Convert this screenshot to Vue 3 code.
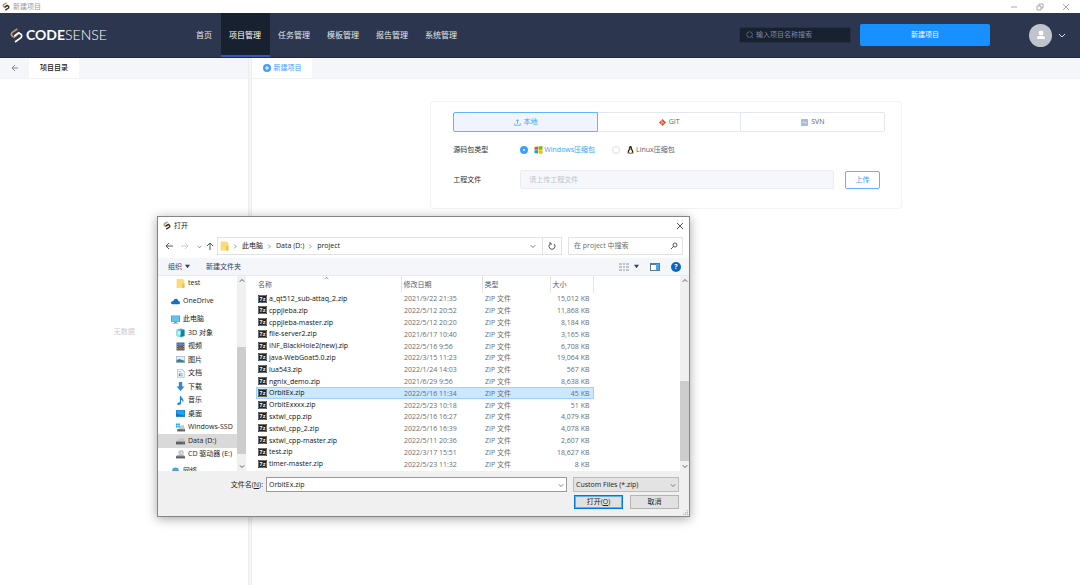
<template>
  <div class="app">
    <div class="titlebar">
      <svg class="brand-icon" viewBox="0 0 39 45">
        <path d="M22 4L7 14q-4 5 0 9l6 4 13-9" fill="none" stroke="#c49363" stroke-width="7" />
        <path d="M16 41l16-11q4-5 0-9l-6-4-13 9" fill="none" stroke="#333" stroke-width="7" />
      </svg>
      <span>新建项目</span>
      <div class="window-controls">
        <button aria-label="最小化"><svg viewBox="0 0 8 8"><path d="M1 4h6" /></svg></button>
        <button aria-label="还原"><svg viewBox="0 0 8 8"><path d="M1 3h4v4H1zM3 3V1h4v4H5" /></svg></button>
        <button aria-label="关闭"><svg viewBox="0 0 8 8"><path d="M1 1l6 6M7 1L1 7" /></svg></button>
      </div>
    </div>

    <header class="navbar">
      <a class="logo" href="#">
        <svg viewBox="0 0 39 45">
          <path d="M22 3L6 14q-4 5 0 10l6 4 14-11" fill="none" stroke="#c9986a" stroke-width="5" />
          <path d="M15 42l18-13q4-5 0-10l-7-5-13 10" fill="none" stroke="#fff" stroke-width="5" />
        </svg>
        <span class="logo-text"><b>CODE</b>SENSE</span>
      </a>
      <nav class="menu">
        <a v-for="item in menu" :key="item" href="#" :class="{ active: item === activeMenu }" @click.prevent="activeMenu = item">{{ item }}</a>
      </nav>
      <div class="nav-right">
        <label class="nav-search">
          <svg viewBox="0 0 10 10"><circle cx="4.5" cy="4.5" r="3.5" /><path d="M7 7l2 2" /></svg>
          <input v-model="keyword" type="text" placeholder="输入项目名称搜索" aria-label="输入项目名称搜索">
        </label>
        <button class="new-project">新建项目</button>
        <button class="user" aria-label="用户">
          <span class="avatar">
            <svg viewBox="0 0 10 10"><circle cx="5" cy="3" r="2.4" /><path d="M1 9V8q0-2 2-2h4q2 0 2 2v1z" /></svg>
          </span>
          <svg class="chevron" viewBox="0 0 8 8"><path d="M1 3l3 3 3-3" /></svg>
        </button>
      </div>
    </header>

    <main class="workspace">
      <aside class="catalog">
        <div class="tabs">
          <button class="back" aria-label="返回"><svg viewBox="0 0 8 8"><path d="M7 4H1M4 1L1 4l3 3" /></svg></button>
          <div class="tab dark">项目目录</div>
        </div>
        <p class="empty">无数据</p>
      </aside>
      <div class="splitter"></div>
      <section class="content">
        <div class="tabs">
          <div class="tab blue">
            <svg viewBox="0 0 8 8"><circle cx="4" cy="4" r="4" fill="#409eff" /><path d="M4 2v4M2 4h4" stroke="#fff" /></svg>
            新建项目
          </div>
        </div>
        <form class="card" @submit.prevent>
          <div class="source-tabs">
            <button type="button" :class="{ active: source === 'local' }" @click="source = 'local'">
              <svg viewBox="0 0 10 10" fill="none" stroke="#409eff"><path d="M1 6v3h8V6M5 7V1M3 3l2-2 2 2" /></svg>本地
            </button>
            <button type="button" :class="{ active: source === 'git' }" @click="source = 'git'">
              <svg viewBox="0 0 10 10"><path d="M5 0l5 5-5 5-5-5z" fill="#de4c36" /><path d="M4 2v6M4 4l3 2" fill="none" stroke="#fff" stroke-width=".8" /></svg>GIT
            </button>
            <button type="button" :class="{ active: source === 'svn' }" @click="source = 'svn'">
              <svg viewBox="0 0 10 10"><rect width="10" height="10" rx="1" fill="#a9bbdb" /><path d="M2 5q2-2 3 0t3 0" fill="none" stroke="#fff" /></svg>SVN
            </button>
          </div>
          <div class="form-row">
            <span class="label">源码包类型</span>
            <label class="radio" :class="{ on: pack === 'windows' }">
              <input v-model="pack" type="radio" name="pack" value="windows">
              <svg viewBox="0 0 16 16">
                <path d="M0 2l7-1v6.500H0z" fill="#f25022" /><path d="M8 1l8-1v7.500H8z" fill="#7fba00" />
                <path d="M0 8.500h7V15l-7-1z" fill="#00a4ef" /><path d="M8 8.500h8V16l-8-1z" fill="#ffb900" />
              </svg>
              Windows压缩包
            </label>
            <label class="radio" :class="{ on: pack === 'linux' }">
              <input v-model="pack" type="radio" name="pack" value="linux">
              <svg viewBox="0 0 16 16">
                <path d="M8 0q3 0 3 4 0 2 2 5 2 4-1 6H4q-3-2-1-6 2-3 2-5 0-4 3-4z" fill="#222" />
                <path d="M8 6q3 3 3 6 0 2-3 2t-3-2q0-3 3-6z" fill="#fff" />
                <path d="M6 4h4L8 6zM2 12l4 3-2 1-3-1zM14 12l-4 3 2 1 3-1z" fill="#f5b61c" />
              </svg>
              Linux压缩包
            </label>
          </div>
          <div class="form-row file-row">
            <label class="label" for="project-file">工程文件</label>
            <input id="project-file" type="text" placeholder="请上传工程文件" disabled>
            <button type="button" class="upload">上传</button>
          </div>
        </form>
      </section>
    </main>

    <div class="dialog" role="dialog" aria-label="打开">
      <div class="dialog-title">
        <svg class="brand-icon" viewBox="0 0 39 45">
          <path d="M22 4L7 14q-4 5 0 9l6 4 13-9" fill="none" stroke="#c49363" stroke-width="7" />
          <path d="M16 41l16-11q4-5 0-9l-6-4-13 9" fill="none" stroke="#333" stroke-width="7" />
        </svg>
        <span>打开</span>
        <button aria-label="关闭"><svg class="line" viewBox="0 0 8 8"><path d="M1 1l6 6M7 1L1 7" /></svg></button>
      </div>

      <div class="address-row">
        <div class="history">
          <button aria-label="后退"><svg class="line" viewBox="0 0 8 8"><path d="M8 4H1M4 1L1 4l3 3" /></svg></button>
          <button aria-label="前进" disabled><svg class="line pale" viewBox="0 0 8 8"><path d="M0 4h7M4 1l3 3-3 3" /></svg></button>
          <button class="small" aria-label="最近"><svg class="line" viewBox="0 0 8 8"><path d="M1 3l3 3 3-3" /></svg></button>
          <button aria-label="上移"><svg class="line" viewBox="0 0 8 8"><path d="M4 8V1M1 4l3-3 3 3" /></svg></button>
        </div>
        <div class="address">
          <svg class="folder" viewBox="0 0 16 16"><path v-for="p in icons.folder" :key="p.d" :d="p.d" :fill="p.fill" /></svg>
          <template v-for="part in path" :key="part">
            <svg class="line sep" viewBox="0 0 8 8"><path d="M2 1l3 3-3 3" /></svg>
            <a href="#" @click.prevent>{{ part }}</a>
          </template>
          <button class="drop" aria-label="以前的位置"><svg class="line" viewBox="0 0 8 8"><path d="M1 3l3 3 3-3" /></svg></button>
          <button class="refresh" aria-label="刷新"><svg class="line" viewBox="0 0 8 8"><path d="M2 2a3 3 0 1 0 4 0M1 1h2v2" /></svg></button>
        </div>
        <label class="file-search">
          <input type="text" placeholder="在 project 中搜索" aria-label="在 project 中搜索">
          <svg class="line" viewBox="0 0 8 8"><circle cx="5" cy="3" r="2" /><path d="M4 4L1 7" /></svg>
        </label>
      </div>

      <div class="toolbar">
        <button>组织 <svg class="arrow" viewBox="0 0 6 6"><path d="M0 1h6L3 5z" /></svg></button>
        <button>新建文件夹</button>
        <div class="view-tools">
          <button aria-label="视图">
            <svg class="view" viewBox="0 0 10 8"><path d="M0 1h3M0 4h3M0 7h3M4 1h2M4 4h2M4 7h2M7 1h3M7 4h3M7 7h3" stroke="#8c9199" fill="none" /></svg>
          </button>
          <button aria-label="更多视图"><svg class="arrow" viewBox="0 0 6 6"><path d="M0 1h6L3 5z" /></svg></button>
          <button aria-label="预览窗格">
            <svg class="view" viewBox="0 0 10 8"><path d="M0 0h10v8H0z" fill="#607890" /><path d="M1 2h5v5H1z" fill="#fff" /><path d="M6 1h3v6H6z" fill="#4ba5ec" /></svg>
          </button>
          <button class="help" aria-label="帮助">?</button>
        </div>
      </div>

      <div class="browser">
        <div class="tree">
          <a v-for="node in topNodes" :key="node.name" href="#" class="node" :class="{ nested: node.nested }" @click.prevent>
            <svg viewBox="0 0 16 16"><path v-for="p in icons[node.icon]" :key="p.d" :d="p.d" :fill="p.fill" /></svg>{{ node.name }}
          </a>
          <div class="children">
            <a v-for="node in children" :key="node.name" href="#" class="node nested" :class="{ current: node.name === place }" @click.prevent="place = node.name">
              <svg viewBox="0 0 16 16"><path v-for="p in icons[node.icon]" :key="p.d" :d="p.d" :fill="p.fill" /></svg>{{ node.name }}
            </a>
          </div>
          <a href="#" class="node" @click.prevent>
            <svg viewBox="0 0 16 16"><path v-for="p in icons.network" :key="p.d" :d="p.d" :fill="p.fill" /></svg>网络
          </a>
        </div>
        <div class="scrollbar">
          <svg class="line" viewBox="0 0 8 8"><path d="M1 5l3-3 3 3" /></svg>
          <div class="track"><div class="thumb tree-thumb"></div></div>
          <svg class="line" viewBox="0 0 8 8"><path d="M1 3l3 3 3-3" /></svg>
        </div>

        <div class="files">
          <table>
            <colgroup><col class="c-name"><col class="c-date"><col class="c-type"><col class="c-size"></colgroup>
            <thead>
              <tr>
                <th>名称<svg class="line sort" viewBox="0 0 8 8"><path d="M1 5l3-3 3 3" /></svg></th>
                <th>修改日期</th><th>类型</th><th>大小</th>
              </tr>
            </thead>
            <tbody>
              <tr v-for="file in files" :key="file[0]" :class="{ selected: file[0] === fileName }" @click="fileName = file[0]">
                <td class="name">
                  <svg viewBox="0 0 18 16"><rect width="18" height="16" fill="#222" /><rect x="1.500" y="1.500" width="15" height="13" fill="none" stroke="#bbb" /><text x="9" y="12" text-anchor="middle">7z</text></svg>{{ file[0] }}
                </td>
                <td>{{ file[1] }}</td>
                <td>ZIP 文件</td>
                <td class="size">{{ file[2] }} KB</td>
              </tr>
            </tbody>
          </table>
        </div>
        <div class="scrollbar">
          <svg class="line" viewBox="0 0 8 8"><path d="M1 5l3-3 3 3" /></svg>
          <div class="track"><div class="thumb files-thumb"></div></div>
          <svg class="line" viewBox="0 0 8 8"><path d="M1 3l3 3 3-3" /></svg>
        </div>
      </div>

      <div class="dialog-footer">
        <div class="name-row">
          <label for="file-name">文件名(<u>N</u>):</label>
          <div class="combo">
            <input id="file-name" v-model="fileName" type="text">
            <svg class="line" viewBox="0 0 8 8"><path d="M1 3l3 3 3-3" /></svg>
          </div>
          <div class="filter">
            <select aria-label="文件类型"><option>Custom Files (*.zip)</option></select>
            <svg class="line" viewBox="0 0 8 8"><path d="M1 3l3 3 3-3" /></svg>
          </div>
        </div>
        <div class="actions">
          <button class="primary"><span>打开(<u>O</u>)</span></button>
          <button>取消</button>
        </div>
        <svg class="grip" viewBox="0 0 8 8"><path d="M6 0h2v2H6zM3 3h2v2H3zM6 3h2v2H6zM0 6h2v2H0zM3 6h2v2H3zM6 6h2v2H6z" fill="#bbb" /></svg>
      </div>
    </div>
  </div>
</template>

<script setup>
import { ref } from 'vue';

const menu = ['首页', '项目管理', '任务管理', '模板管理', '报告管理', '系统管理'];
const activeMenu = ref('项目管理');
const keyword = ref('');
const source = ref('local');
const pack = ref('windows');

const path = ['此电脑', 'Data (D:)', 'project'];
const place = ref('Data (D:)');
const fileName = ref('OrbitEx.zip');

const topNodes = [
  { name: 'test', icon: 'folder', nested: true },
  { name: 'OneDrive', icon: 'cloud' },
  { name: '此电脑', icon: 'pc' },
];

const children = [
  { name: '3D 对象', icon: 'cube' },
  { name: '视频', icon: 'video' },
  { name: '图片', icon: 'image' },
  { name: '文档', icon: 'doc' },
  { name: '下载', icon: 'download' },
  { name: '音乐', icon: 'music' },
  { name: '桌面', icon: 'desktop' },
  { name: 'Windows-SSD', icon: 'system' },
  { name: 'Data (D:)', icon: 'drive' },
  { name: 'CD 驱动器 (E:)', icon: 'cd' },
];

// name, modified date, size in KB
const files = [
  ['a_qt512_sub-attaq_2.zip', '2021/9/22 21:35', '15,012'],
  ['cppjieba.zip', '2022/5/12 20:52', '11,868'],
  ['cppjieba-master.zip', '2022/5/12 20:20', '8,184'],
  ['file-server2.zip', '2021/6/17 10:40', '3,165'],
  ['INF_BlackHole2(new).zip', '2022/5/16 9:56', '6,708'],
  ['java-WebGoat5.0.zip', '2022/3/15 11:23', '19,064'],
  ['lua543.zip', '2022/1/24 14:03', '567'],
  ['ngnix_demo.zip', '2021/6/29 9:56', '8,638'],
  ['OrbitEx.zip', '2022/5/16 11:34', '45'],
  ['OrbitExxxx.zip', '2022/5/23 10:18', '51'],
  ['sxtwl_cpp.zip', '2022/5/16 16:27', '4,079'],
  ['sxtwl_cpp_2.zip', '2022/5/16 16:39', '4,078'],
  ['sxtwl_cpp-master.zip', '2022/5/11 20:36', '2,607'],
  ['test.zip', '2022/3/17 15:51', '18,627'],
  ['timer-master.zip', '2022/5/23 11:32', '8'],
];

// 16x16 icons, painted in order
const icons = {
  folder: [{ d: 'M1 0h11l3 3v13H1z', fill: '#fbdc7c' }, { d: 'M11 8h4v8h-4z', fill: '#edc04e' }],
  cloud: [{ d: 'M3 13q-3 0-3-3t4-3q1-4 5-4 3 0 4 4 3 0 3 3t-3 3z', fill: '#0b74cc' }],
  pc: [{ d: 'M0 1h16v11H0z', fill: '#3d8fc9' }, { d: 'M1 2h14v9H1z', fill: '#62c4f6' }, { d: 'M6 12h4v2h3v1H3v-1h3z', fill: '#6e8799' }],
  cube: [{ d: 'M1 3l8-2 6 2v11l-6 2-8-2z', fill: '#28b5d2' }, { d: 'M1 3l7 2v11l-7-2z', fill: '#8ee5ee' }, { d: 'M8 5l7-2v11l-7 2z', fill: '#10819f' }, { d: 'M4 7l4-2v7l-4-1z', fill: '#e6fbff' }],
  video: [{ d: 'M1 1h14v14H1z', fill: '#434b5c' }, { d: 'M4 2h8v5H4z', fill: '#5482d0' }, { d: 'M4 8h8v6H4z', fill: '#8e6b4d' }, { d: 'M2 3h1v2H2zM2 7h1v2H2zM2 11h1v2H2zM13 3h1v2h-1zM13 7h1v2h-1zM13 11h1v2h-1z', fill: '#fff' }],
  image: [{ d: 'M0 2h16v12H0z', fill: '#9aa7b3' }, { d: 'M1 3h14v10H1z', fill: '#dff2fb' }, { d: 'M1 9l5-2 9 3v3H1z', fill: '#3f7d92' }],
  doc: [{ d: 'M2 0h9l4 4v12H2z', fill: '#9eb2c2' }, { d: 'M3 1h7l4 4v10H3z', fill: '#f4faff' }, { d: 'M5 4h4v1H5zM5 7h7v1H5zM5 9h3v4H5zM9 10h3v1H9zM9 12h3v1H9z', fill: '#4a90c4' }],
  download: [{ d: 'M5 0h6v8h4l-7 8-7-8h4z', fill: '#3586d6' }],
  music: [{ d: 'M7 0h2q0 3 3 5 3 3 0 7 1-4-3-6v7q0 3-4 3-3 0-3-2 0-3 5-3z', fill: '#1685dc' }],
  desktop: [{ d: 'M0 2h16v12H0z', fill: '#0a78cc' }, { d: 'M1 3h14v9L1 8z', fill: '#1da5f5' }],
  system: [{ d: 'M0 1h3v3H0zM4 1h3v3H4zM0 5h3v3H0zM4 5h3v3H4z', fill: '#00a4ef' }, { d: 'M8 4h6l2 7H4z', fill: '#c3c7ca' }, { d: 'M2 11h14v4H2z', fill: '#5c6266' }, { d: 'M12 12h2v1h-2z', fill: '#70f286' }],
  drive: [{ d: 'M6 4h8l2 6H0z', fill: '#c3c7ca' }, { d: 'M0 10h16v5H0z', fill: '#5c6266' }, { d: 'M12 12h2v1h-2z', fill: '#70f286' }],
  cd: [{ d: 'M9 0a5 5 0 1 1 0 10A5 5 0 1 1 9 0z', fill: '#c5c9ce' }, { d: 'M9 4h2v2H9z', fill: '#fff' }, { d: 'M2 9h12l2 2H0z', fill: '#adb1b4' }, { d: 'M0 11h16v4H0z', fill: '#5c6266' }],
  network: [{ d: 'M8 1a6 6 0 1 1 0 12A6 6 0 1 1 8 1z', fill: '#4ba5d8' }, { d: 'M1 9h9v6H1z', fill: '#75828c' }],
};
</script>

<style>
body {
  margin: 0;
  background: #fff;
}
</style>

<style scoped>
.app {
  position: relative;
  display: flex;
  flex-direction: column;
  min-height: 100vh;
  font-family: "Open Sans", "Noto Sans CJK SC", sans-serif;
  font-size: 7px;
  line-height: 12px;
  color: #303133;
}

.app * {
  box-sizing: border-box;
}

button,
input,
select {
  margin: 0;
  padding: 0;
  border: 0;
  background: none;
  font: inherit;
  color: inherit;
  outline: 0;
}

a {
  color: inherit;
  text-decoration: none;
}

svg {
  display: block;
  flex: none;
  width: 8px;
  height: 8px;
}

.line {
  fill: none;
  stroke: #555;
  stroke-width: 1;
}

.line.pale {
  stroke: #ccc;
}

/* window title */
.titlebar {
  display: flex;
  align-items: center;
  gap: 2px;
  height: 13px;
  padding-left: 1px;
  color: #999;
}

.window-controls {
  display: flex;
  gap: 18px;
  margin-left: auto;
  padding-right: 10px;
}

.window-controls svg {
  fill: none;
  stroke: #aaa;
  stroke-width: 1;
}

/* navigation */
.navbar {
  display: flex;
  align-items: stretch;
  height: 45px;
  border-bottom: 1px solid #1f2940;
  background: #2c374f;
  color: #e4e7ed;
}

.logo {
  display: flex;
  align-items: center;
  gap: 3px;
  width: 188px;
  padding-left: 10px;
}

.logo svg {
  width: 13px;
  height: 15px;
}

.logo-text {
  font: 300 14px/18px Lato, sans-serif;
  color: #fff;
}

.logo-text b {
  font-weight: 700;
}

.menu {
  display: flex;
  font-size: 8px;
}

.menu a {
  display: flex;
  align-items: center;
  padding: 0 9px 0 8px;
  border: solid transparent;
  border-width: 2px 0;
}

.menu a.active {
  border-top-color: #18212f;
  border-bottom-color: #3850c8;
  background: #18212f;
  color: #fff;
}

.nav-right {
  display: flex;
  align-items: center;
  margin-left: auto;
  padding-right: 14px;
}

.nav-search {
  display: flex;
  align-items: center;
  gap: 2px;
  width: 112px;
  height: 16px;
  margin-right: 9px;
  padding-left: 6px;
  border: 1px solid #263044;
  border-radius: 1px;
  background: #18212f;
}

.nav-search svg {
  fill: none;
  stroke: #65718a;
}

.nav-search input {
  flex: 1;
  min-width: 0;
}

.nav-search input::placeholder {
  color: #7e8aa3;
  opacity: 1;
}

.new-project {
  width: 130px;
  height: 22px;
  border-radius: 2px;
  background: #1890ff;
  color: #fff;
}

.user {
  display: flex;
  align-items: center;
  gap: 6px;
  margin-left: 39px;
}

.avatar {
  display: grid;
  place-items: center;
  width: 23px;
  height: 23px;
  border-radius: 50%;
  background: #c0c4cc;
}

.avatar svg {
  width: 10px;
  height: 10px;
  fill: #fff;
}

.chevron {
  fill: none;
  stroke: #dcdfe6;
}

/* panes */
.workspace {
  display: flex;
  flex: 1;
}

.catalog {
  display: flex;
  flex-direction: column;
  width: 23%;
}

.splitter {
  width: 4px;
  border: solid #ededed;
  border-width: 0 1px;
  background: #f6f6f6;
}

.content {
  flex: 1;
}

.tabs {
  display: flex;
  height: 21px;
  border-bottom: 1px solid #f0f2f5;
  background: #f4f6fa;
}

.back {
  display: grid;
  place-items: center;
  width: 29px;
}

.back svg {
  fill: none;
  stroke: #888;
}

.tab {
  display: flex;
  align-items: center;
  gap: 2px;
  padding: 0 11px;
  background: #fff;
}

.tab.dark {
  color: #222;
  font-weight: 500;
}

.tab.blue {
  color: #409eff;
}

.empty {
  display: grid;
  flex: 1;
  place-items: center;
  margin: 0;
  color: #c6c9cf;
}

/* project form */
.card {
  display: flex;
  flex-direction: column;
  width: 57%;
  margin: 22px auto 0;
  padding: 10px 16px 19px 22px;
  border: 1px solid #f2f3f5;
  border-radius: 4px;
}

.source-tabs {
  display: flex;
  height: 20px;
}

.source-tabs button {
  display: flex;
  flex: 1;
  align-items: center;
  justify-content: center;
  gap: 3px;
  border: 1px solid #e4e7ed;
  border-left-width: 0;
  color: #606266;
}

.source-tabs button:last-child {
  border-radius: 0 2px 2px 0;
}

.source-tabs button.active {
  border: 1px solid #66b1ff;
  border-radius: 2px 0 0 2px;
  background: #f0f4ff;
  color: #409eff;
}

.source-tabs svg {
  width: 7px;
  height: 7px;
}

.form-row {
  display: flex;
  align-items: center;
  height: 20px;
  margin-top: 8px;
}

.label {
  width: 67px;
}

.radio {
  display: flex;
  align-items: center;
  gap: 1px;
  margin-right: 17px;
  color: #606266;
}

.radio.on {
  color: #409eff;
}

.radio input {
  width: 8px;
  height: 8px;
  margin-right: 5px;
  border: 1px solid #dcdfe6;
  border-radius: 50%;
  appearance: none;
}

.radio input:checked {
  border: 3px solid #409eff;
  background: #fff;
}

.radio svg {
  width: 9px;
}

.file-row {
  height: 19px;
  margin-top: 10px;
}

.file-row input {
  flex: 1;
  min-width: 0;
  height: 19px;
  padding: 0 8px;
  border: 1px solid #e9ecf2;
  border-radius: 2px;
  background: #f5f7fa;
}

.file-row input::placeholder {
  color: #c0c4cc;
  opacity: 1;
}

.upload {
  width: 35px;
  height: 18px;
  margin: 0 5px 0 11px;
  border: 1px solid #66b1ff;
  border-radius: 2px;
  color: #409eff;
}

/* file dialog */
.dialog {
  position: absolute;
  top: 216px;
  left: 157px;
  width: 533px;
  border: 1px solid #858585;
  background: #fff;
  box-shadow: 0 2px 10px rgba(0, 0, 0, 0.35);
  color: #222;
}

.dialog button {
  display: grid;
  place-items: center;
}

.brand-icon {
  width: 10px;
  height: 9px;
}

.dialog-title {
  display: flex;
  align-items: center;
  gap: 2px;
  height: 17px;
  padding: 0 5px 0 4px;
}

.dialog-title button {
  margin-left: auto;
}

.address-row {
  display: flex;
  align-items: center;
  gap: 6px;
  height: 24px;
  padding-right: 6px;
}

.history {
  display: flex;
  align-items: center;
  gap: 8px;
  width: 54px;
  margin-right: -1px;
  padding-left: 7px;
}

.history .small svg {
  width: 5px;
  height: 5px;
}

.history button:last-child {
  margin-left: -4px;
}

.address {
  display: flex;
  flex: 1;
  align-items: center;
  gap: 4px;
  height: 18px;
  padding-left: 2px;
  border: 1px solid #e2e2e2;
}

.address .folder {
  width: 9px;
  height: 10px;
}

.address .sep {
  width: 5px;
  height: 5px;
}

.address .drop {
  margin-left: auto;
}

.address .drop svg {
  width: 6px;
  height: 6px;
}

.address .refresh {
  width: 19px;
  height: 16px;
  margin-left: 2px;
  border-left: 1px solid #e2e2e2;
}

.file-search {
  display: flex;
  align-items: center;
  width: 115px;
  height: 18px;
  padding: 0 4px 0 5px;
  border: 1px solid #e2e2e2;
}

.file-search input {
  flex: 1;
  min-width: 0;
}

.file-search input::placeholder {
  color: #6d6d6d;
  opacity: 1;
}

.toolbar {
  display: flex;
  align-items: center;
  gap: 16px;
  height: 18px;
  padding: 0 8px 0 10px;
  border-bottom: 1px solid #e8eaed;
  background: #f5f6f9;
  color: #2b4560;
}

.toolbar button {
  grid-auto-flow: column;
  gap: 3px;
}

.arrow {
  width: 5px;
  height: 5px;
  fill: #2b4560;
}

.view-tools {
  display: flex;
  align-items: center;
  gap: 11px;
  margin-left: auto;
}

.view-tools button:nth-child(2) {
  margin-left: -6px;
}

.view {
  width: 10px;
  height: 8px;
}

.view-tools .help {
  width: 10px;
  height: 10px;
  border-radius: 50%;
  background: #0766c4;
  color: #fff;
  font-weight: 700;
  line-height: 10px;
}

.browser {
  display: flex;
  height: 195px;
  overflow: hidden;
}

.tree {
  width: 79px;
  overflow: hidden;
}

.node {
  display: flex;
  align-items: center;
  gap: 3px;
  height: 14px;
  margin-bottom: 4px;
  padding-left: 13px;
  white-space: nowrap;
}

.node svg {
  width: 9px;
  height: 9px;
}

.node.nested {
  padding-left: 18px;
}

.node:nth-child(3) {
  margin-bottom: 0;
}

.node.current {
  background: #d9d9d9;
}

.children {
  display: flex;
  flex-direction: column;
  height: 135px;
  margin-bottom: 3px;
}

.children .node {
  flex: 1;
  height: auto;
  min-height: 0;
  margin: 0;
}

.scrollbar {
  display: flex;
  flex-direction: column;
  align-items: center;
  justify-content: space-between;
  width: 9px;
  padding: 2px 0;
  background: #f0f0f0;
}

.scrollbar svg {
  width: 6px;
  height: 6px;
  stroke: #333;
}

.track {
  display: flex;
  flex: 1;
  flex-direction: column;
  justify-content: flex-end;
  width: 100%;
  padding: 2px 0;
}

.thumb {
  background: #cdcdcd;
}

.tree-thumb {
  height: 61%;
  margin-bottom: 7px;
}

.files-thumb {
  height: 46%;
}

.files {
  flex: 1;
  padding-left: 10px;
}

table {
  width: 338px;
  height: 194px;
  border-collapse: collapse;
  table-layout: fixed;
}

.c-name {
  width: 145px;
}

.c-date {
  width: 81px;
}

.c-type {
  width: 68px;
}

th,
td {
  padding: 0 4px 0 3px;
  line-height: 11px;
  white-space: nowrap;
  text-align: left;
  color: #6d6d6d;
}

th {
  position: relative;
  height: 17px;
  padding-left: 2px;
  border-right: 1px solid #e5e5e5;
  font-weight: 400;
  color: #4c607a;
}

.sort {
  position: absolute;
  top: 0;
  left: 47%;
  width: 5px;
  height: 5px;
}

td.name {
  display: flex;
  align-items: center;
  gap: 2px;
  padding-left: 2px;
  color: #111;
}

td.name svg {
  width: 9px;
  height: 8px;
}

td.name text {
  fill: #fff;
  font: 700 11px "Liberation Sans", sans-serif;
}

td.size {
  text-align: right;
}

tr.selected {
  background: #cce8ff;
  box-shadow: inset 0 0 0 1px #99d1ff;
}

.dialog-footer {
  position: relative;
  height: 45px;
  padding: 6px 10px 0 0;
  background: #f0f0f0;
}

.name-row {
  display: flex;
  align-items: center;
  height: 15px;
}

.name-row label {
  width: 108px;
  padding-right: 3px;
  text-align: right;
}

.combo,
.filter {
  display: flex;
  align-items: center;
  height: 15px;
  padding-right: 2px;
  border: 1px solid #999;
  background: #fff;
}

.combo {
  flex: 1;
}

.combo input,
.filter select {
  flex: 1;
  min-width: 0;
  padding-left: 2px;
}

.name-row svg {
  width: 6px;
  height: 6px;
}

.filter {
  width: 106px;
  margin-left: 6px;
  border-color: #bcbcbc;
  background: #e3e3e3;
}

.filter select {
  appearance: none;
}

.actions {
  display: flex;
  justify-content: flex-end;
  gap: 7px;
  margin-top: 3px;
}

.actions button {
  width: 49px;
  height: 14px;
  border: 1px solid #b5b5b5;
  background: #e1e1e1;
}

.actions .primary {
  border: 1px solid #0078d7;
  box-shadow: inset 0 0 0 1px #66aee7;
}

.grip {
  position: absolute;
  right: 1px;
  bottom: 1px;
  width: 5px;
  height: 5px;
}
</style>
